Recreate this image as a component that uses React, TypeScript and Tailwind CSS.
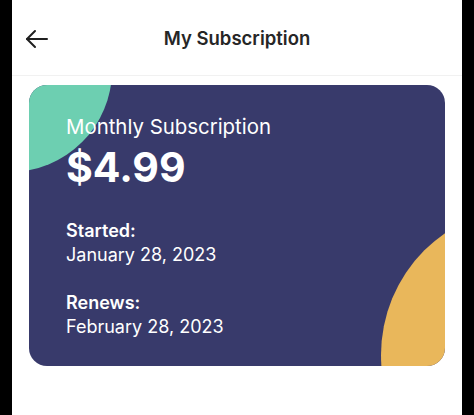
const font = { fontFamily: "Inter, 'Noto Sans', sans-serif" };

function BackArrow() {
  return (
    <svg width="24" height="24" viewBox="0 0 24 24" fill="none" stroke="#1f1f1f" strokeWidth="2" strokeLinecap="round" strokeLinejoin="round">
      <path d="M22 12H2" />
      <path d="M10 4l-8 8 8 8" />
    </svg>
  );
}

function Row({ label, value }: { label: string; value: string }) {
  return (
    <div>
      <div className="text-[18px] leading-[24px] font-semibold">{label}</div>
      <div className="text-[18px] leading-[24px] font-normal">{value}</div>
    </div>
  );
}

export default function App() {
  return (
    <div className="w-[474px] h-[415px] bg-black flex overflow-hidden" style={font}>
      <div className="ml-[12px] w-[450px] h-full bg-white flex flex-col">
        <header className="h-[76px] pt-[3px] flex items-center px-[13px] border-b border-[#f1f1f1]">
          <BackArrow />
          <h1 className="flex-1 text-center text-[18.5px] font-semibold text-[#262626]">
            My Subscription
          </h1>
          <div className="w-[24px]" />
        </header>

        <div className="relative ml-[17px] mt-[9px] w-[416px] h-[281px] rounded-[18px] overflow-hidden bg-[#383a6b] text-white">
          <div className="absolute left-[-121px] top-[-117px] w-[204px] h-[204px] rounded-full bg-[#6dcfb1]" />
          <div className="absolute left-[352px] top-[122px] w-[296px] h-[296px] rounded-full bg-[#e9b75b]" />

          <div className="relative pl-[37px] pt-[30px] flex flex-col">
            <div className="text-[20.4px] leading-[24px]">Monthly Subscription</div>
            <div className="mt-[4px] text-[41px] leading-[48px] font-bold">$4.99</div>
            <div className="mt-[28px] flex flex-col gap-[24px]">
              <Row label="Started:" value="January 28, 2023" />
              <Row label="Renews:" value="February 28, 2023" />
            </div>
          </div>
        </div>
      </div>
    </div>
  );
}
